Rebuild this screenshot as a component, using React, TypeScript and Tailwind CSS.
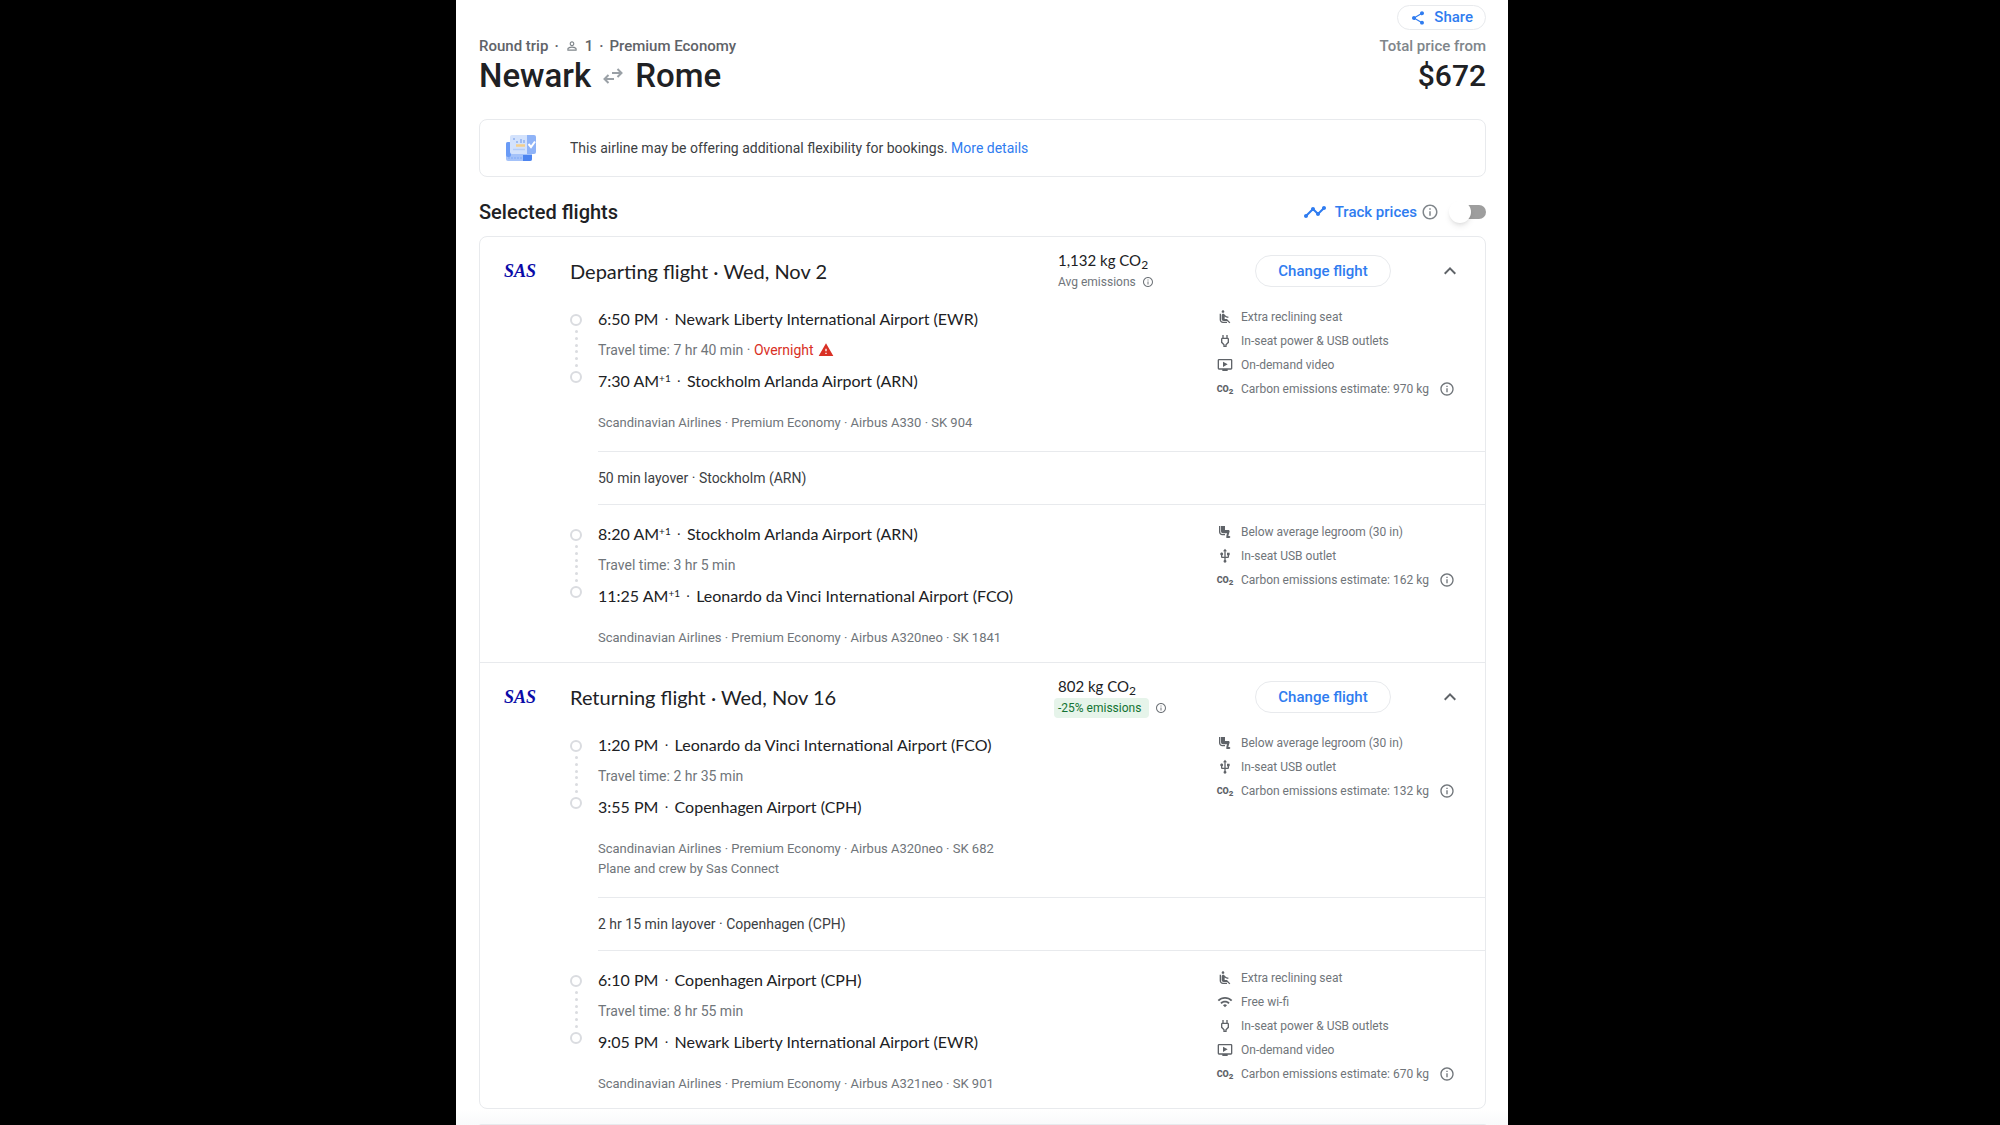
import React from 'react';
import {
    MdAirlineSeatLegroomReduced,
    MdAirlineSeatReclineNormal,
    MdExpandLess,
    MdOndemandVideo,
    MdOutlineInfo,
    MdOutlinePower,
    MdPersonOutline,
    MdShare,
    MdTimeline,
    MdUsb,
    MdWarning,
    MdWifi,
} from 'react-icons/md';

type Amenity = { kind: keyof typeof amenityIcons; text: string };

type Leg = {
    depart: string;
    departNextDay?: boolean;
    from: string;
    arrive: string;
    arriveNextDay?: boolean;
    to: string;
    duration: string;
    overnight?: boolean;
    details: string[];
    amenities: Amenity[];
    layover?: string;
};

type Flight = {
    title: string;
    emissions: string;
    badge?: string;
    legs: Leg[];
};

const amenityIcons = {
    recline: <MdAirlineSeatReclineNormal className="size-4" />,
    legroom: <MdAirlineSeatLegroomReduced className="size-4" />,
    power: <MdOutlinePower className="size-4" />,
    usb: <MdUsb className="size-4" />,
    wifi: <MdWifi className="size-4" />,
    video: <MdOndemandVideo className="size-4" />,
    co2: <span className="text-[9px] font-black leading-4">CO<sub className="text-[8px]">2</sub></span>,
};

const flights: Flight[] = [
    {
        title: 'Departing flight · Wed, Nov 2',
        emissions: '1,132 kg CO',
        legs: [
            {
                depart: '6:50 PM',
                from: 'Newark Liberty International Airport (EWR)',
                arrive: '7:30 AM',
                arriveNextDay: true,
                to: 'Stockholm Arlanda Airport (ARN)',
                duration: '7 hr 40 min',
                overnight: true,
                details: ['Scandinavian Airlines · Premium Economy · Airbus A330 · SK 904'],
                amenities: [
                    { kind: 'recline', text: 'Extra reclining seat' },
                    { kind: 'power', text: 'In-seat power & USB outlets' },
                    { kind: 'video', text: 'On-demand video' },
                    { kind: 'co2', text: 'Carbon emissions estimate: 970 kg' },
                ],
                layover: '50 min layover · Stockholm (ARN)',
            },
            {
                depart: '8:20 AM',
                departNextDay: true,
                from: 'Stockholm Arlanda Airport (ARN)',
                arrive: '11:25 AM',
                arriveNextDay: true,
                to: 'Leonardo da Vinci International Airport (FCO)',
                duration: '3 hr 5 min',
                details: ['Scandinavian Airlines · Premium Economy · Airbus A320neo · SK 1841'],
                amenities: [
                    { kind: 'legroom', text: 'Below average legroom (30 in)' },
                    { kind: 'usb', text: 'In-seat USB outlet' },
                    { kind: 'co2', text: 'Carbon emissions estimate: 162 kg' },
                ],
            },
        ],
    },
    {
        title: 'Returning flight · Wed, Nov 16',
        emissions: '802 kg CO',
        badge: '-25% emissions',
        legs: [
            {
                depart: '1:20 PM',
                from: 'Leonardo da Vinci International Airport (FCO)',
                arrive: '3:55 PM',
                to: 'Copenhagen Airport (CPH)',
                duration: '2 hr 35 min',
                details: [
                    'Scandinavian Airlines · Premium Economy · Airbus A320neo · SK 682',
                    'Plane and crew by Sas Connect',
                ],
                amenities: [
                    { kind: 'legroom', text: 'Below average legroom (30 in)' },
                    { kind: 'usb', text: 'In-seat USB outlet' },
                    { kind: 'co2', text: 'Carbon emissions estimate: 132 kg' },
                ],
                layover: '2 hr 15 min layover · Copenhagen (CPH)',
            },
            {
                depart: '6:10 PM',
                from: 'Copenhagen Airport (CPH)',
                arrive: '9:05 PM',
                to: 'Newark Liberty International Airport (EWR)',
                duration: '8 hr 55 min',
                details: ['Scandinavian Airlines · Premium Economy · Airbus A321neo · SK 901'],
                amenities: [
                    { kind: 'recline', text: 'Extra reclining seat' },
                    { kind: 'wifi', text: 'Free wi-fi' },
                    { kind: 'power', text: 'In-seat power & USB outlets' },
                    { kind: 'video', text: 'On-demand video' },
                    { kind: 'co2', text: 'Carbon emissions estimate: 670 kg' },
                ],
            },
        ],
    },
];

const TicketArt = () => (
    <svg viewBox="0 0 30 28" className="h-7 w-[30px]" aria-hidden="true">
        <rect x="0" y="8" width="26" height="19" rx="2" fill="#a4c2f9" />
        <rect x="0" y="8" width="5" height="15" rx="2" fill="#6a9bf6" />
        <path d="M17 21h9v4a2 2 0 0 1-2 2h-7z" fill="#4c84f0" />
        <path d="M2 24h15" stroke="#8ab1f7" strokeWidth="1.5" strokeDasharray="2 1" />
        <path d="M6 1h15v19H6a2 2 0 0 1-2-2V3a2 2 0 0 1 2-2z" fill="#d3e2fc" />
        <path d="M21 1h7a2 2 0 0 1 2 2v15a2 2 0 0 1-2 2h-7z" fill="#8fb3f7" />
        <path d="M7 5h2M11 7v2M15 5v4M18 6v3" stroke="#8fb0ee" strokeWidth="1.5" />
        <path d="M10 11.5h9" stroke="#f3cf8e" strokeWidth="2.5" />
        <path d="M7 15.5h12" stroke="#b4cdf9" strokeWidth="1.5" />
        <path d="M22.5 10l2.5 3 4-5.5" stroke="#fff" strokeWidth="2" fill="none" />
    </svg>
);

const RoundTripArrows = () => (
    <svg viewBox="0 0 20 18" className="h-[18px] w-5 text-[#9aa0a6]" fill="none" stroke="currentColor" strokeWidth="2" aria-hidden="true">
        <path d="M9 6h9M14.5 2l4 4-4 4" />
        <path d="M11 12H2M5.5 8l-4 4 4 4" />
    </svg>
);

const Stop = ({ time, nextDay, airport }: { time: string; nextDay?: boolean; airport: string }) => (
    <p className="h-6 font-[Lato,sans-serif] text-base leading-6 text-[#202124]">
        {time}
        {nextDay && <sup className="text-[10px]">+1</sup>}
        <span className="px-1.5 font-[Roboto,sans-serif]">·</span>
        {airport}
    </p>
);

const LegRow = ({ leg, first }: { leg: Leg; first: boolean }) => (
    <>
        <div className={first ? 'flex pl-[90px]' : 'flex pl-[90px] pt-[15px]'}>
            <div className="flex w-7 flex-col pt-[9px]">
                <span className="size-3 rounded-full border-2 border-[#dadce0]" />
                <span className="flex h-[45px] w-3 flex-col items-center justify-evenly">
                    {[0, 1, 2, 3, 4, 5].map((dot) => (
                        <span key={dot} className="size-[3px] rounded-full bg-[#dadce0]" />
                    ))}
                </span>
                <span className="size-3 rounded-full border-2 border-[#dadce0]" />
            </div>
            <div className={leg.layover ? 'flex-1 pb-[18px] pt-0.5' : 'flex-1 pb-3.5 pt-0.5'}>
                <Stop time={leg.depart} nextDay={leg.departNextDay} airport={leg.from} />
                <p className="my-2 flex h-[22px] items-center whitespace-pre text-sm text-[#70757a]">
                    Travel time: {leg.duration}
                    {leg.overnight && (
                        <span className="flex items-center text-[#d93025]">
                            <span className="text-[#70757a]"> · </span>Overnight
                            <MdWarning className="ml-1 size-4" />
                        </span>
                    )}
                </p>
                <Stop time={leg.arrive} nextDay={leg.arriveNextDay} airport={leg.to} />
                <div className="mt-5 text-[13px] leading-5 text-[#70757a]">
                    {leg.details.map((line) => (
                        <p key={line}>{line}</p>
                    ))}
                </div>
            </div>
            <ul className="w-[268px] text-xs text-[#70757a]">
                {leg.amenities.map(({ kind, text }) => (
                    <li key={text} className="flex h-6 items-center gap-2">
                        <span className="flex w-4 justify-center text-[#5f6368]">{amenityIcons[kind]}</span>
                        <span className="flex items-center gap-2.5">
                            {text}
                            {kind === 'co2' && <MdOutlineInfo className="size-4" />}
                        </span>
                    </li>
                ))}
            </ul>
        </div>
        {leg.layover && (
            <p className="ml-[118px] border-y border-[#e8eaed] py-[15px] text-sm leading-[22px] text-[#3c4043]">{leg.layover}</p>
        )}
    </>
);

const FlightSection = ({ flight }: { flight: Flight }) => (
    <section className="border-b border-[#e8eaed] last:border-b-0">
        <div className="flex h-[68px] items-center">
            <span className="w-[90px] pl-6 font-['Liberation_Serif',serif] text-lg font-bold italic leading-6 text-[#0b0ba8]">SAS</span>
            <h3 className="flex-1 font-[Lato,sans-serif] text-xl text-[#202124]">{flight.title}</h3>
            <div className="w-[197px]">
                <p className="font-[Lato,sans-serif] text-[15px] leading-5 text-[#202124]">
                    {flight.emissions}
                    <sub className="text-xs">2</sub>
                </p>
                <p className="mt-0.5 flex h-5 items-center gap-1.5 text-xs text-[#70757a]">
                    {flight.badge ? (
                        <span className="-ml-1 rounded-sm bg-[#e6f4ea] pl-1 pr-2 leading-5 text-[#137333]">{flight.badge}</span>
                    ) : (
                        <span>Avg emissions</span>
                    )}
                    <MdOutlineInfo className="size-3" />
                </p>
            </div>
            <button type="button" className="h-8 w-[136px] rounded-full border border-[#e8eaed] text-[15px] font-medium text-[#2f7cf0]">
                Change flight
            </button>
            <button type="button" aria-label="Collapse" className="ml-[47px] mr-[23px] text-[#5f6368]">
                <MdExpandLess className="size-6" />
            </button>
        </div>
        {flight.legs.map((leg, i) => (
            <LegRow key={leg.depart} leg={leg} first={i === 0} />
        ))}
    </section>
);

const App = () => {
    return (
        <div className="flex min-h-screen justify-center bg-black pr-9 font-[Roboto,sans-serif]">
            <main className="flex w-full max-w-[1052px] flex-col bg-white pl-[23px] pr-[22px] pt-[5px]">
                <header className="flex items-end justify-between">
                    <div>
                        <p className="flex h-5 items-center gap-1.5 text-[15px] font-medium text-[#5f6368]">
                            Round trip
                            <span>·</span>
                            <span className="flex items-center gap-1.5">
                                <MdPersonOutline className="size-3.5 text-[#80868b]" />1
                            </span>
                            <span>·</span>
                            Premium Economy
                        </p>
                        <h1 className="flex h-10 items-center gap-3 text-[33px] font-medium leading-9 text-[#202124]">
                            Newark
                            <RoundTripArrows />
                            Rome
                        </h1>
                    </div>
                    <div className="flex flex-col items-end">
                        <button type="button" className="mb-1.5 flex h-[25px] items-center gap-2 rounded-full border border-[#e8eaed] px-3 text-[15px] font-medium text-[#2f7cf0]">
                            <MdShare className="size-4" />
                            Share
                        </button>
                        <p className="h-5 text-[15px] font-medium leading-5 text-[#80868b]">Total price from</p>
                        <p className="flex h-10 items-center text-3xl font-medium text-[#202124]">$672</p>
                    </div>
                </header>

                <div className="mt-[23px] flex h-[58px] items-center rounded-lg border border-[#e8eaed] pl-[26px] text-sm text-[#3c4043]">
                    <span className="w-16">
                        <TicketArt />
                    </span>
                    <p>
                        This airline may be offering additional flexibility for bookings.{' '}
                        <a href="#" className="text-[#2f7cf0]">More details</a>
                    </p>
                </div>

                <div className="mb-[5px] mt-4 flex h-[38px] items-center justify-between">
                    <h2 className="text-xl font-medium text-[#202124]">Selected flights</h2>
                    <div className="flex items-center text-[15px] font-medium text-[#2f7cf0]">
                        <MdTimeline className="mr-2 size-6" />
                        <label htmlFor="track-prices">Track prices</label>
                        <MdOutlineInfo className="ml-1 size-[18px] text-[#80868b]" />
                        <input
                            id="track-prices"
                            type="checkbox"
                            role="switch"
                            className="relative ml-3.5 h-3.5 w-[33px] appearance-none rounded-full bg-[#9e9e9e] before:absolute before:-left-1 before:-top-1 before:size-[22px] before:rounded-full before:bg-white before:shadow-md"
                        />
                    </div>
                </div>

                <div className="rounded-lg border border-[#e8eaed]">
                    {flights.map((flight) => (
                        <FlightSection key={flight.title} flight={flight} />
                    ))}
                </div>

                <div className="-ml-[23px] -mr-[22px] flex-1 bg-linear-to-b from-white to-[#f8f9fa] pl-[23px] pr-[22px] pt-[15px]">
                    <div className="h-0.5 rounded-t-lg border border-b-0 border-[#e8eaed]" />
                </div>
            </main>
        </div>
    );
};

export default App;
